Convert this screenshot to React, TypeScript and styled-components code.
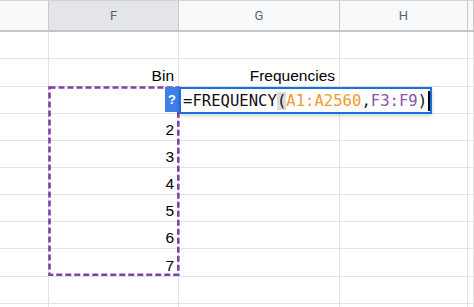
import styled, { createGlobalStyle } from "styled-components";

const GlobalStyle = createGlobalStyle`
  html, body {
    margin: 0;
    padding: 0;
    background: #ffffff;
    overflow: hidden;
  }
`;

const COLUMNS = "49px 130px 161px 128px 1fr";

const Frame = styled.div`
  position: relative;
  width: 474px;
  height: 307px;
  overflow: hidden;
  background: #ffffff;
`;

const HeaderRow = styled.div`
  display: grid;
  grid-template-columns: ${COLUMNS};
  height: 32px;
  box-sizing: border-box;
  border-top: 1px solid #d4d4d4;
  border-bottom: 2px solid #c4c4c4;
`;

const HeaderCell = styled.div<{ $active?: boolean }>`
  display: flex;
  align-items: center;
  justify-content: center;
  border-right: 1px solid #c9c9c9;
  background: ${({ $active }) => ($active ? "#e3e5e8" : "#f8f9fa")};
  color: #5f6368;
  font-family: Roboto, "Liberation Sans", sans-serif;
  font-size: 13px;
  padding-bottom: 1px;
`;

const Row = styled.div<{ $h: number }>`
  display: grid;
  grid-template-columns: ${COLUMNS};
  height: ${({ $h }) => $h}px;
  box-sizing: border-box;
  border-bottom: 1px solid #e2e3e3;
`;

const Cell = styled.div`
  display: flex;
  align-items: flex-end;
  justify-content: flex-end;
  border-right: 1px solid #e2e3e3;
  padding: 0 4px 2px 0;
  color: #000000;
  font-family: "Liberation Sans", Arial, sans-serif;
  font-size: 15.5px;
  line-height: 17px;
  white-space: nowrap;
`;

const Marquee = styled.svg`
  position: absolute;
  left: 0;
  top: 0;
  pointer-events: none;
`;

const Editor = styled.div`
  position: absolute;
  left: 165px;
  top: 87px;
  display: flex;
  align-items: flex-start;
`;

const HelpBadge = styled.div`
  width: 14px;
  height: 25px;
  background: #3f7fe8;
  color: #ffffff;
  display: flex;
  align-items: center;
  justify-content: center;
  font-family: "Liberation Sans", Arial, sans-serif;
  font-weight: 700;
  font-size: 13px;
`;

const InputBox = styled.div`
  width: 253px;
  height: 27px;
  box-sizing: border-box;
  border: 2px solid #1a6fe0;
  background: #ffffff;
  box-shadow: 0 2px 4px rgba(0, 0, 0, 0.18);
  display: flex;
  align-items: center;
  padding-left: 2px;
  font-family: "DejaVu Sans Mono", "Liberation Mono", monospace;
  font-size: 15.6px;
  color: #000000;
  white-space: pre;
`;

const Token = styled.span<{ $tone?: "range" | "bins" | "match" }>`
  color: ${({ $tone }) =>
    $tone === "range" ? "#f29a2e" : $tone === "bins" ? "#8a55ad" : "#111111"};
  background: ${({ $tone }) => ($tone === "match" ? "#dcdcdc" : "transparent")};
`;

const Caret = styled.span`
  display: inline-block;
  width: 1.5px;
  height: 20px;
  background: #000000;
  margin-left: 1px;
`;

const rows: { h: number; f?: string; g?: string }[] = [
  { h: 27 },
  { h: 28, f: "Bin", g: "Frequencies" },
  { h: 27 },
  { h: 27, f: "2" },
  { h: 27, f: "3" },
  { h: 27, f: "4" },
  { h: 27, f: "5" },
  { h: 27, f: "6" },
  { h: 28, f: "7" },
  { h: 27 },
  { h: 27 },
];

export default function App() {
  return (
    <Frame>
      <GlobalStyle />
      <HeaderRow>
        <HeaderCell />
        <HeaderCell $active>F</HeaderCell>
        <HeaderCell>G</HeaderCell>
        <HeaderCell>H</HeaderCell>
        <HeaderCell />
      </HeaderRow>

      {rows.map((row, i) => (
        <Row key={i} $h={row.h}>
          <Cell />
          <Cell>{row.f}</Cell>
          <Cell>{row.g}</Cell>
          <Cell />
          <Cell />
        </Row>
      ))}

      <Marquee width="474" height="307">
        <rect
          x="49.5"
          y="87.5"
          width="128.8"
          height="187.2"
          fill="none"
          stroke="#8140a6"
          strokeWidth="2.6"
          strokeDasharray="6 3"
        />
      </Marquee>

      <Editor>
        <HelpBadge>?</HelpBadge>
        <InputBox>
          <Token>=FREQUENCY</Token>
          <Token $tone="match">(</Token>
          <Token $tone="range">A1:A2560</Token>
          <Token>,</Token>
          <Token $tone="bins">F3:F9</Token>
          <Token>)</Token>
          <Caret />
        </InputBox>
      </Editor>
    </Frame>
  );
}
